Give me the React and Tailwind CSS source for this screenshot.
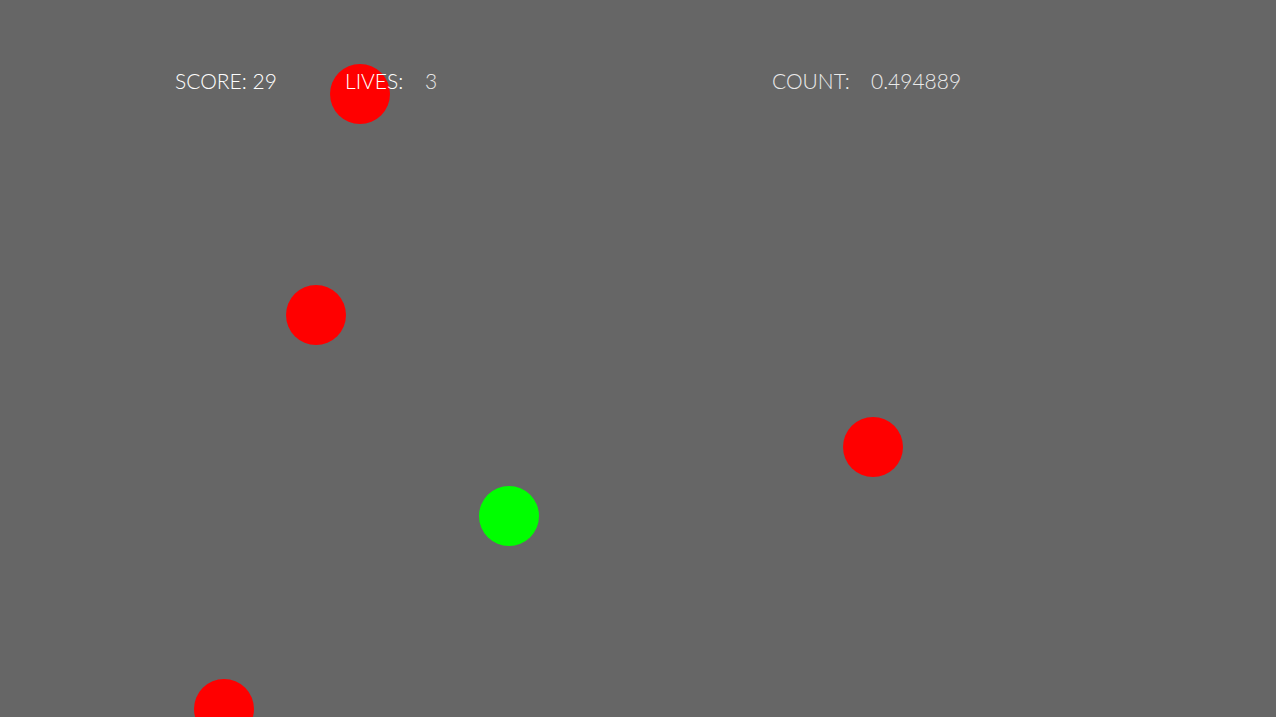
export default function App() {
  const balls = [
    { x: 360, y: 94, c: "bg-[#ff0000]" },
    { x: 316, y: 315, c: "bg-[#ff0000]" },
    { x: 873, y: 447, c: "bg-[#ff0000]" },
    { x: 224, y: 709, c: "bg-[#ff0000]" },
    { x: 509, y: 516, c: "bg-[#00ff00]" },
  ];
  return (
    <div className="relative w-[1276px] h-[717px] overflow-hidden bg-[#666666]" style={{ fontFamily: "Lato, 'Open Sans', sans-serif" }}>
      {balls.map((b, i) => (
        <div
          key={i}
          className={`absolute w-[60px] h-[60px] rounded-full ${b.c}`}
          style={{ left: b.x - 30, top: b.y - 30 }}
        />
      ))}
      <div className="relative flex items-baseline pt-[66px] pl-[175px] text-[21px] leading-[30px] font-light">
        <span className="w-[170px] text-white">SCORE: 29</span>
        <span className="w-[80px] text-white">LIVES:</span>
        <span className="w-[347px] text-[#e8e8e8]">3</span>
        <span className="w-[99px] text-[#ebebeb]">COUNT:</span>
        <span className="text-[#ebebeb]">0.494889</span>
      </div>
    </div>
  );
}
